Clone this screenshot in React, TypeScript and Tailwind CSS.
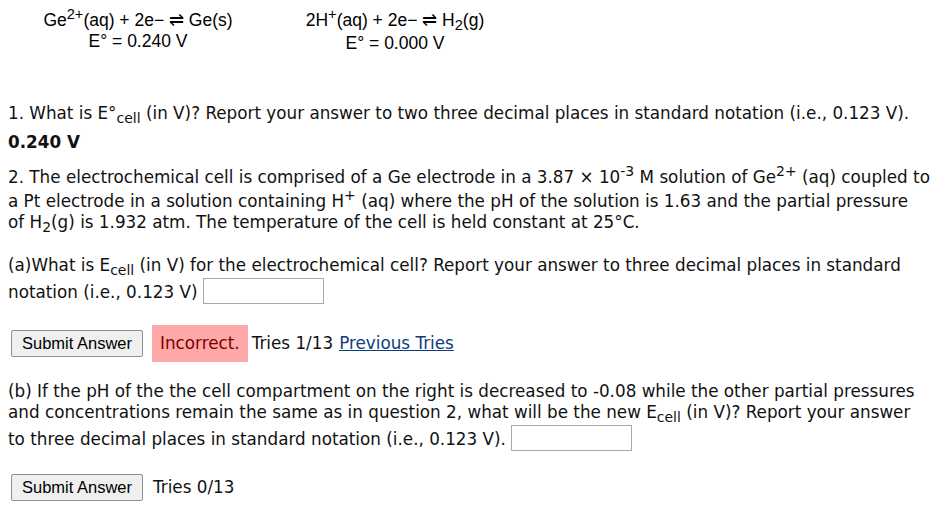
const Sup = ({ children, high }: { children: React.ReactNode; high?: boolean }) => (
    <sup
        className={
            high
                ? "static align-[0.5em] text-[smaller] leading-[normal]"
                : "static align-super text-[smaller] leading-[normal]"
        }
    >
        {children}
    </sup>
);

const Sub = ({ children }: { children: React.ReactNode }) => (
    <sub className="static align-sub text-[smaller] leading-[normal]">{children}</sub>
);

const AnswerBox = () => (
    <input
        type="text"
        className="relative -top-[2px] inline-block align-middle my-[2px] w-[121px] h-[26px] border border-[#a9a9a9] bg-white"
    />
);

const SubmitButton = () => (
    <button className="h-[27px] w-[132px] rounded-[2px] border border-[#8f8f8f] bg-[#efefef] text-[16.5px] text-black font-['Liberation_Sans',Arial,sans-serif]">
        Submit Answer
    </button>
);

const App = () => {
    return (
        <div className="min-h-[521px] bg-white px-2 text-[16.8px] leading-[21px] text-[#111] font-['Verdana','DejaVu_Sans',sans-serif]">
            <div className="flex gap-[37px] pl-5 pt-[6px] text-[17.5px] leading-[normal] text-black font-['Liberation_Sans',Arial,sans-serif]">
                <div className="w-[220px] text-center">
                    <div>
                        Ge<Sup>2+</Sup>(aq) + 2e− ⇌ Ge(s)
                    </div>
                    <div>E° = 0.240 V</div>
                </div>
                <div className="w-[220px] text-center">
                    <div>
                        2H<Sup>+</Sup>(aq) + 2e− ⇌ H<Sub>2</Sub>(g)
                    </div>
                    <div>E° = 0.000 V</div>
                </div>
            </div>

            <p className="mt-[49px]">
                1. What is E°<Sub>cell</Sub> (in V)? Report your answer to two three decimal
                places in standard notation (i.e., 0.123 V).
            </p>
            <p className="mt-[5px] font-bold">0.240 V</p>

            <p className="mt-[10px] whitespace-nowrap">
                2. The electrochemical cell is comprised of a Ge electrode in a 3.87 × 10
                <Sup>-3</Sup> M solution of Ge<Sup>2+</Sup> (aq) coupled to
                <br />a Pt electrode in a solution containing H<Sup high>+</Sup> (aq) where the
                pH of the solution is 1.63 and the partial pressure
                <br />
                of H<Sub>2</Sub>(g) is 1.932 atm. The temperature of the cell is held
                constant at 25°C.
            </p>

            <p className="mt-[19px] whitespace-nowrap">
                (a)What is E<Sub>cell</Sub> (in V) for the electrochemical cell? Report your
                answer to three decimal places in standard
                <br />
                notation (i.e., 0.123 V) <AnswerBox />
            </p>

            <div className="mt-[17px] flex items-center">
                <div className="ml-[3px]">
                    <SubmitButton />
                </div>
                <span className="ml-[9px] bg-[#ffa8a8] px-2 py-[8px] text-[#7a0000]">
                    Incorrect.
                </span>
                <span className="ml-1">Tries 1/13</span>
                <a href="#" className="ml-[6px] text-[#0f3c7c] underline">
                    Previous Tries
                </a>
            </div>

            <p className="mt-[19px] whitespace-nowrap">
                (b) If the pH of the the cell compartment on the right is decreased to -0.08
                while the other partial pressures
                <br />
                and concentrations remain the same as in question 2, what will be the new E
                <Sub>cell</Sub> (in V)? Report your answer
                <br />
                to three decimal places in standard notation (i.e., 0.123 V). <AnswerBox />
            </p>

            <div className="mt-[19px] flex items-center">
                <div className="ml-[3px]">
                    <SubmitButton />
                </div>
                <span className="ml-[10px]">Tries 0/13</span>
            </div>
        </div>
    );
};

export default App;
